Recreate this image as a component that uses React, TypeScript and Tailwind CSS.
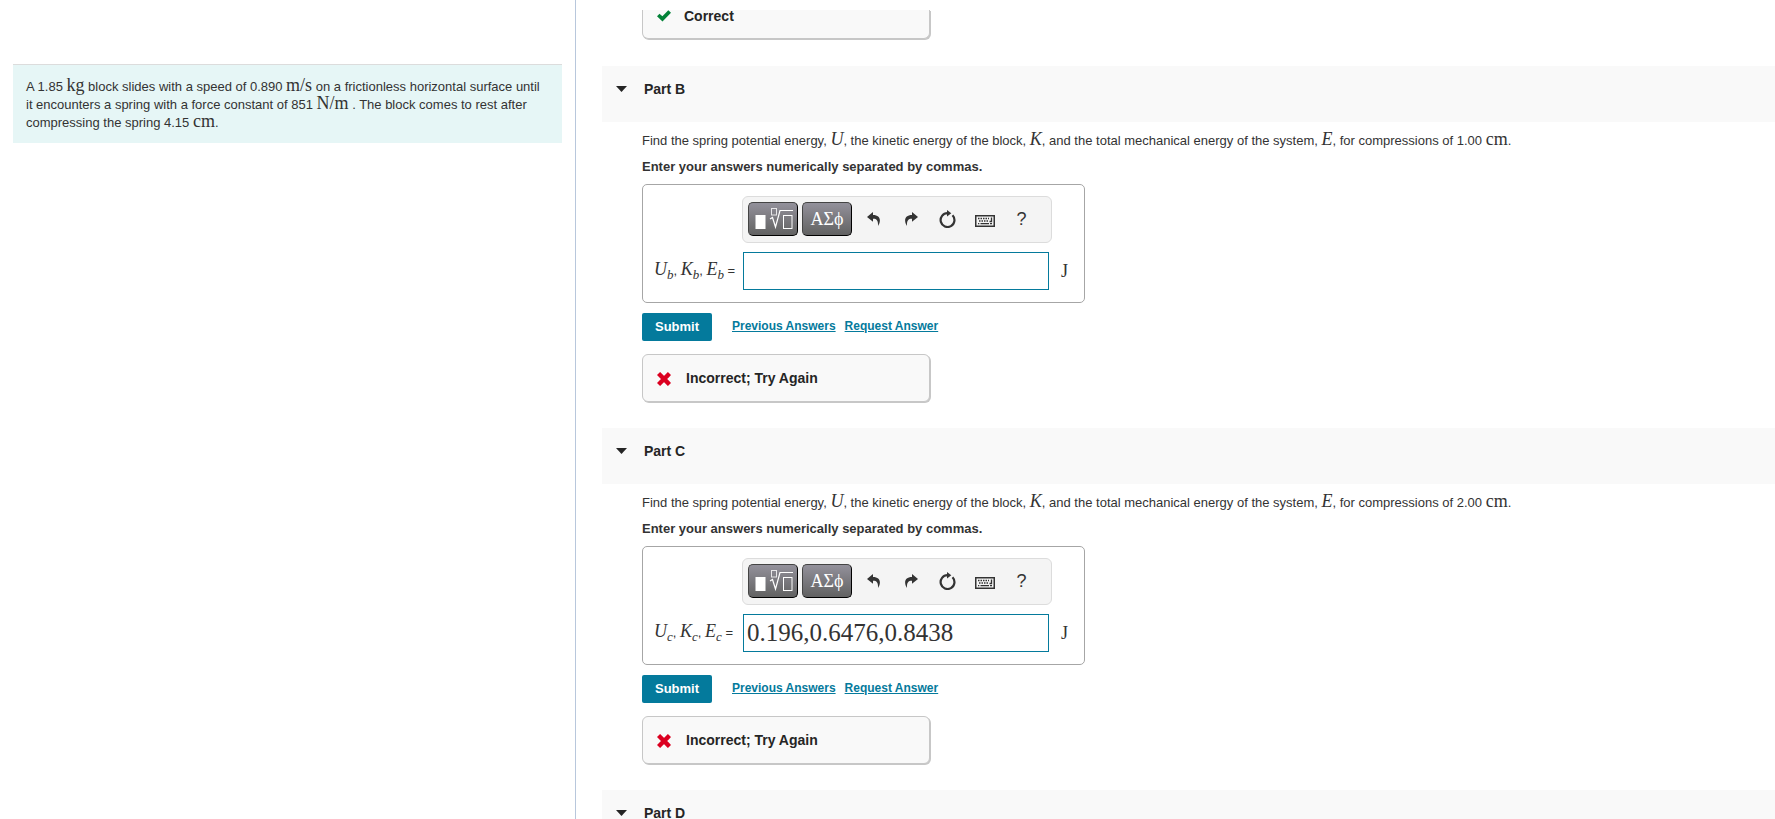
import React, { useState } from 'react';

interface Part {
  id: string;
  title: string;
  compression: string;
  subscript: string;
  initial: string;
}

const parts: Part[] = [
  { id: 'b', title: 'Part B', compression: '1.00', subscript: 'b', initial: '' },
  { id: 'c', title: 'Part C', compression: '2.00', subscript: 'c', initial: '0.196,0.6476,0.8438' },
];

function CheckIcon() {
  return (
    <svg viewBox="0 0 14 12" className="w-[14px] h-[12px] text-[#038238]" fill="currentColor" aria-hidden="true">
      <path d="M0 6.2 2.5 3.7 5.4 6.2 11.3 0.3 14 2.8 5.5 11.4Z" />
    </svg>
  );
}

function CrossIcon() {
  return (
    <svg viewBox="0 0 14 14" className="w-[14px] h-[14px] text-[#db0020]" fill="none" stroke="currentColor" strokeWidth="4.4" strokeLinecap="square" strokeLinejoin="round" aria-hidden="true">
      <path d="M3.1 3.1 10.9 10.9M10.9 3.1 3.1 10.9" />
    </svg>
  );
}

function CaretIcon() {
  return (
    <svg viewBox="0 0 11 6" className="w-[11px] h-[6px] text-[#252525]" fill="currentColor" aria-hidden="true">
      <path d="M0 0H11L5.5 6Z" />
    </svg>
  );
}

function TemplateIcon() {
  return (
    <svg viewBox="0 0 38 24" className="w-[38px] h-[24px]" fill="none" stroke="#fff" aria-hidden="true">
      <rect x="0.5" y="8" width="10" height="14" fill="#fff" stroke="none" />
      <rect x="16.5" y="1.5" width="5" height="6.5" strokeOpacity="0.8" />
      <path d="M15 12 17.5 10.5 20.5 20 25 3.5H38" strokeWidth="1.2" />
      <rect x="28.5" y="8.5" width="8.5" height="13" />
    </svg>
  );
}

function UndoIcon() {
  return (
    <svg viewBox="0 0 14 14" className="w-[14px] h-[14px]" fill="currentColor" aria-hidden="true">
      <path d="M6 0 0 5 6 9.7V6.8C9.7 6.6 11.3 8.6 11 14 14.6 8.2 13.1 3.2 6 3.1Z" />
    </svg>
  );
}

function RedoIcon() {
  return (
    <svg viewBox="0 0 14 14" className="w-[14px] h-[14px]" fill="currentColor" aria-hidden="true">
      <path d="M8 0 14 5 8 9.7V6.8C4.3 6.6 2.7 8.6 3 14 -0.6 8.2 0.9 3.2 8 3.1Z" />
    </svg>
  );
}

function ResetIcon() {
  return (
    <svg viewBox="0 0 17 18" className="w-[17px] h-[18px]" fill="none" stroke="currentColor" aria-hidden="true">
      <path d="M13.5 5.3A6.9 6.9 0 1 1 8.5 3.2" strokeWidth="2.2" />
      <path d="M8 0 12.3 3.3 8 6.6Z" fill="currentColor" stroke="none" />
    </svg>
  );
}

function KeyboardIcon() {
  return (
    <svg viewBox="0 0 20 12" className="w-[20px] h-[12px]" fill="none" stroke="currentColor" aria-hidden="true">
      <rect x="0.75" y="0.75" width="18.5" height="10.5" strokeWidth="1.5" />
      <path d="M3 3.5H14M4 6H14" strokeWidth="1.5" strokeDasharray="1.5 1" />
      <path d="M3 8.7H4.3M5.5 8.7H14M15 8.7H17M16.5 2.5V6.5H14.5" strokeWidth="1.3" />
    </svg>
  );
}

// Zero line height keeps the larger serif text from stretching the lines it sits in
function Unit({ children }: { children: React.ReactNode }) {
  return <span className="font-['Liberation_Serif',serif] text-[18px] leading-[0]">{children}</span>;
}

function Variable({ name, sub }: { name: string; sub?: string }) {
  return (
    <span className="font-['Liberation_Serif',serif] italic text-[18px] leading-[0]">
      {name}
      {sub && <sub className="text-[13px]">{sub}</sub>}
    </span>
  );
}

function PartHeader({ title }: { title: string }) {
  return (
    <h2 className="h-14 bg-[#f9f9f9]">
      <button type="button" aria-expanded="true" className="flex items-center gap-[17px] pl-[14px] h-[46px] text-[14px] font-bold text-[#252525]">
        <CaretIcon />
        {title}
      </button>
    </h2>
  );
}

function Toolbar() {
  const dark = 'flex items-center justify-center w-[50px] h-[34px] rounded-[5px] border border-[#444] border-r-black border-b-black bg-linear-to-b from-[#93919b] to-[#626262] text-white';
  const plain = 'flex items-center justify-center w-[37px] h-[34px]';

  return (
    <div role="toolbar" aria-label="Equation tools" className="flex items-start w-[310px] h-[47px] px-[5px] pt-[5px] bg-[#f4f4f4] border border-[#dcdcdc] rounded-md text-[#333]">
      <button type="button" aria-label="Templates" className={`${dark} pl-[2px]`}><TemplateIcon /></button>
      <button type="button" aria-label="Symbols" className={`${dark} ml-1 mr-[3px] font-['Liberation_Serif',serif] text-[18px]`}>ΑΣϕ</button>
      <button type="button" aria-label="Undo" className={plain}><UndoIcon /></button>
      <button type="button" aria-label="Redo" className={plain}><RedoIcon /></button>
      <button type="button" aria-label="Reset" className={plain}><ResetIcon /></button>
      <button type="button" aria-label="Keyboard shortcuts" className={`${plain} pt-1`}><KeyboardIcon /></button>
      <button type="button" aria-label="Help" className={`${plain} text-[18px]`}>?</button>
    </div>
  );
}

function PartSection({ part }: { part: Part }) {
  const [answer, setAnswer] = useState(part.initial);
  const inputId = `answer-${part.id}`;

  return (
    <section>
      <PartHeader title={part.title} />

      <div className="pl-10 pt-[9px] pb-[26px]">
        <p className="h-5 leading-5 whitespace-nowrap">
          Find the spring potential energy, <Variable name="U" />, the kinetic energy of the block, <Variable name="K" />, and the total mechanical energy of the system, <Variable name="E" />, for compressions of {part.compression} <Unit>cm</Unit>.
        </p>
        <p className="mt-[6px] h-5 leading-5 font-bold">Enter your answers numerically separated by commas.</p>

        {/* Answer entry */}
        <div className="mt-[7px] w-[443px] h-[119px] pt-[11px] border border-[#a6a6a6] rounded-[5px]">
          <div className="pl-[99px]"><Toolbar /></div>
          <div className="mt-[9px] flex items-center">
            <label htmlFor={inputId} className="w-[100px] pl-[11px] whitespace-nowrap">
              <Variable name="U" sub={part.subscript} />, <Variable name="K" sub={part.subscript} />, <Variable name="E" sub={part.subscript} /> =
            </label>
            <input
              id={inputId}
              type="text"
              value={answer}
              onChange={(e) => setAnswer(e.target.value)}
              className="w-[306px] h-[38px] px-[3px] border border-[#047a9c] bg-white font-['Liberation_Serif',serif] text-[25px] text-[#333] outline-none"
            />
            <span className="ml-3 font-['Liberation_Serif',serif] text-[18px]">J</span>
          </div>
        </div>

        <div className="mt-[10px] flex items-start h-7 text-[12px] font-bold">
          <button type="button" className="w-[70px] h-7 rounded-[2px] bg-[#047a9c] text-[13px] text-white">Submit</button>
          <a href="#previous" className="ml-5 leading-[26px] text-[#047a9c] underline">Previous Answers</a>
          <a href="#request" className="ml-[9px] leading-[26px] text-[#047a9c] underline">Request Answer</a>
        </div>

        {/* Feedback */}
        <div role="status" className="mt-[13px] flex items-center gap-[15px] w-[288px] h-[48px] pl-[14px] pt-px bg-[#f9f9f9] border border-[#c7c7c7] rounded-md shadow-[1px_1px_0_#c7c7c7] text-[14px] font-bold text-[#252525]">
          <CrossIcon />
          Incorrect; Try Again
        </div>
      </div>
    </section>
  );
}

export default function App() {
  return (
    <div className="flex h-screen overflow-hidden bg-white font-['Liberation_Sans',Arial,sans-serif] text-[13px] text-[#333]">
      {/* Problem statement */}
      <aside className="w-xl shrink-0 border-r border-[#b8c7dc] pt-16 pl-[13px] pr-[13px]">
        <p className="border-t border-[#dcdcdc] bg-[#e6f6f6] pl-[13px] pr-5 pt-[13px] pb-[11px] leading-[18px]">
          A 1.85 <Unit>kg</Unit> block slides with a speed of 0.890 <Unit>m/s</Unit> on a frictionless horizontal surface until it encounters a spring with a force constant of 851 <Unit>N/m</Unit> . The block comes to rest after compressing the spring 4.15 <Unit>cm</Unit>.
        </p>
      </aside>

      {/* Parts */}
      <main className="flex-1 min-w-0 mt-[10px] pl-[26px] overflow-hidden">
        <div role="status" className="ml-10 mb-[27px] flex items-start gap-[13px] w-[288px] h-[29px] pl-[14px] bg-[#f9f9f9] border border-t-0 border-[#c7c7c7] rounded-b-md shadow-[1px_1px_0_#c7c7c7] text-[14px] leading-3 font-bold text-[#252525]">
          <CheckIcon />
          Correct
        </div>

        {parts.map((part) => (
          <PartSection key={part.id} part={part} />
        ))}

        <section>
          <PartHeader title="Part D" />
        </section>
      </main>
    </div>
  );
}
